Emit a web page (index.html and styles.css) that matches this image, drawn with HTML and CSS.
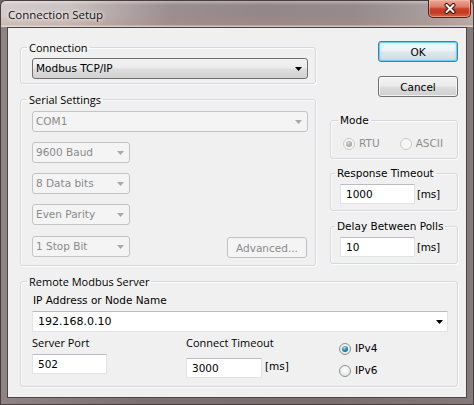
FILE: index.html
```html
<!DOCTYPE html>
<html>
<head>
<meta charset="utf-8">
<link rel="stylesheet" href="styles.css">
</head>
<body>
<div class="window">
  <div class="titlebar">
    <span class="title">Connection Setup</span>
    <button class="close" aria-label="Close">
      <svg width="14" height="11" viewBox="0 0 14 11"><path d="M3.5 2 L10.5 9 M10.5 2 L3.5 9" stroke="#4a1208" stroke-width="4" stroke-linecap="round"/><path d="M3.5 2 L10.5 9 M10.5 2 L3.5 9" stroke="#fff" stroke-width="2" stroke-linecap="round"/></svg>
    </button>
  </div>
  <div class="client">
    <div class="top">
      <div class="left">
        <fieldset class="group g-conn">
          <legend>Connection</legend>
          <div class="combo">
            <span>Modbus TCP/IP</span>
            <svg class="arrow" width="7" height="4" viewBox="0 0 7 4"><path d="M0 0 H7 L3.5 4 Z" fill="#000"/></svg>
          </div>
        </fieldset>
        <fieldset class="group g-serial">
          <legend>Serial Settings</legend>
          <div class="combo disabled">
            <span>COM1</span>
            <svg class="arrow" width="7" height="4" viewBox="0 0 7 4"><path d="M0 0 H7 L3.5 4 Z" fill="#a8a8a8"/></svg>
          </div>
          <div class="combo disabled small">
            <span>9600 Baud</span>
            <svg class="arrow" width="7" height="4" viewBox="0 0 7 4"><path d="M0 0 H7 L3.5 4 Z" fill="#a8a8a8"/></svg>
          </div>
          <div class="combo disabled small">
            <span>8 Data bits</span>
            <svg class="arrow" width="7" height="4" viewBox="0 0 7 4"><path d="M0 0 H7 L3.5 4 Z" fill="#a8a8a8"/></svg>
          </div>
          <div class="combo disabled small">
            <span>Even Parity</span>
            <svg class="arrow" width="7" height="4" viewBox="0 0 7 4"><path d="M0 0 H7 L3.5 4 Z" fill="#a8a8a8"/></svg>
          </div>
          <div class="serial-last">
            <div class="combo disabled small">
              <span>1 Stop Bit</span>
              <svg class="arrow" width="7" height="4" viewBox="0 0 7 4"><path d="M0 0 H7 L3.5 4 Z" fill="#a8a8a8"/></svg>
            </div>
            <button class="btn disabled adv">Advanced...</button>
          </div>
        </fieldset>
      </div>
      <div class="right">
        <button class="btn default">OK</button>
        <button class="btn cancel">Cancel</button>
        <fieldset class="group g-mode">
          <legend class="tah">Mode</legend>
          <div class="radios">
            <label class="opt disabled"><span class="radio checked"></span>RTU</label>
            <label class="opt disabled"><span class="radio"></span>ASCII</label>
          </div>
        </fieldset>
        <fieldset class="group g-side">
          <legend class="tah">Response Timeout</legend>
          <div class="unit-row"><div class="textbox w75">1000</div><span class="unit tight">[ms]</span></div>
        </fieldset>
        <fieldset class="group g-side g-delay">
          <legend class="tah">Delay Between Polls</legend>
          <div class="unit-row"><div class="textbox w75">10</div><span class="unit tight">[ms]</span></div>
        </fieldset>
      </div>
    </div>
    <fieldset class="group g-remote">
      <legend>Remote Modbus Server</legend>
      <div class="lbl tah">IP Address or Node Name</div>
      <div class="combo edit">
        <span>192.168.0.10</span>
        <svg class="arrow" width="7" height="4" viewBox="0 0 7 4"><path d="M0 0 H7 L3.5 4 Z" fill="#000"/></svg>
      </div>
      <div class="remote-row">
        <div class="col c1">
          <div class="lbl">Server Port</div>
          <div class="textbox w75">502</div>
        </div>
        <div class="col c2">
          <div class="lbl">Connect Timeout</div>
          <div class="unit-row"><div class="textbox w76">3000</div><span class="unit">[ms]</span></div>
        </div>
        <div class="col c3">
          <label class="opt"><span class="radio checked live"></span>IPv4</label>
          <label class="opt"><span class="radio"></span>IPv6</label>
        </div>
      </div>
    </fieldset>
  </div>
</div>
</body>
</html>
```
FILE: styles.css
```css
html, body {
  margin: 0;
  padding: 0;
}
body {
  width: 474px;
  height: 405px;
  overflow: hidden;
  background: #6f6464;
}
.window {
  width: 474px;
  height: 405px;
  box-sizing: border-box;
  border: 1px solid #4a3e3c;
  border-radius: 6px 6px 0 0;
  background: linear-gradient(90deg, #8f8484 0%, #7c7171 30%, #7a6f70 70%, #857a7b 100%);
  display: flex;
  flex-direction: column;
  font-family: "Open Sans", "Liberation Sans", sans-serif;
  font-size: 11px;
  color: #000;
}
.titlebar {
  height: 26px;
  flex: none;
  display: flex;
  align-items: flex-start;
  border-radius: 5px 5px 0 0;
  background:
    linear-gradient(180deg, rgba(255,255,255,0.35) 0px, rgba(255,255,255,0) 4px, rgba(0,0,0,0) 14px, rgba(190,140,120,0.28) 24px, rgba(230,220,215,0.7) 25px, rgba(230,220,215,0.7) 26px),
    linear-gradient(90deg, #d3cccc 0%, #cbc2c2 14%, #b5a9aa 24%, #9b8d90 36%, #94878a 55%, #968a8c 75%, #a79d9d 90%, #b9b1b1 100%);
}
.title {
  margin: 6px 0 0 7px;
  font-family: "Open Sans", sans-serif;
  font-size: 11.5px;
  line-height: 16px;
  color: #111;
  text-shadow: 0 0 6px rgba(255,255,255,0.9), 0 0 3px rgba(255,255,255,0.8);
}
.close {
  margin: -1px 2px 0 auto;
  width: 43px;
  height: 18px;
  padding: 0;
  border: 1px solid #5b1f14;
  border-top: none;
  border-radius: 0 0 5px 5px;
  background: linear-gradient(180deg, #e9a898 0%, #dd7d68 40%, #c8402a 52%, #c33a22 75%, #d8674b 100%);
  box-shadow: inset 0 0 0 1px rgba(255,200,180,0.5);
  display: flex;
  align-items: center;
  justify-content: center;
}
.client {
  flex: 1;
  margin: 0 6px 6px 6px;
  border: 1px solid #4e4443;
  background: #f0f0f0;
  padding: 12px 8px 0 12px;
  display: flex;
  flex-direction: column;
}
.top {
  display: flex;
  gap: 14px;
}
.left {
  width: 296px;
  display: flex;
  flex-direction: column;
}
.right {
  width: 128px;
  display: flex;
  flex-direction: column;
  align-items: stretch;
}
.group {
  margin: 0;
  padding: 3px 7px 4px 11px;
  border: 1px solid #d5d9dd;
  border-radius: 3px;
  box-shadow: inset 1px 1px 0 #fbfbfb, 1px 1px 0 #fbfbfb;
  min-width: 0;
}
.group legend {
  padding: 0 2px;
  margin-left: -5px;
  font-family: "Open Sans", sans-serif;
  font-size: 11px;
  line-height: 15px;
}
.group legend.tah, .tah {
  font-family: "DejaVu Sans", sans-serif;
  font-size: 10.5px;
}
.g-serial {
  margin-top: 8px;
  padding-top: 4px;
  padding-bottom: 7px;
  display: flex;
  flex-direction: column;
  gap: 10px;
}
.combo {
  height: 21px;
  box-sizing: border-box;
  border: 1px solid #707070;
  border-radius: 3px;
  background: linear-gradient(180deg, #f3f3f3 0%, #ebebeb 48%, #dedede 52%, #d2d2d2 100%);
  display: flex;
  align-items: center;
  justify-content: space-between;
  padding: 0 5px 0 3px;
  font-family: "DejaVu Sans", sans-serif;
  font-size: 10.5px;
  line-height: 15px;
}
.combo.disabled {
  border-color: #c2c4c6;
  background: #f4f4f4;
  color: #8a8a8a;
}
.combo.small {
  width: 98px;
}
.serial-last {
  display: flex;
  justify-content: space-between;
  align-items: flex-start;
  margin-top: 1px;
}
.btn {
  height: 21px;
  box-sizing: border-box;
  padding: 0;
  border: 1px solid #707070;
  border-radius: 3px;
  background: linear-gradient(180deg, #f2f2f2 0%, #ebebeb 48%, #dddddd 52%, #cfcfcf 100%);
  font-family: "DejaVu Sans", sans-serif;
  font-size: 10.5px;
  color: #000;
  box-shadow: inset 0 0 0 1px rgba(255,255,255,0.7);
}
.btn.disabled {
  border-color: #bfc2c4;
  background: #f4f4f4;
  color: #8a8a8a;
  box-shadow: none;
}
.adv {
  width: 80px;
  margin-top: 1px;
  margin-right: 1px;
}
.btn.default {
  width: 80px;
  align-self: flex-end;
  margin-top: 1px;
  border-color: #3c7fb1;
  box-shadow: inset 0 0 0 1px #6cd0f5, inset 0 0 3px 1px rgba(120,210,245,0.6);
  background: linear-gradient(180deg, #f4f9fb 0%, #eaf2f6 48%, #dde7ec 52%, #d2dde3 100%);
}
.btn.cancel {
  width: 80px;
  align-self: flex-end;
  margin-top: 14px;
}
.g-mode {
  margin-top: 16px;
  padding: 8px 7px 7px 12px;
}
.radios {
  display: flex;
  gap: 20px;
}
.opt {
  display: flex;
  align-items: center;
  font-family: "DejaVu Sans", sans-serif;
  font-size: 10.5px;
  line-height: 15px;
  white-space: nowrap;
}
.opt.disabled {
  color: #8d8d8d;
}
.radio {
  width: 12px;
  height: 12px;
  box-sizing: border-box;
  border-radius: 50%;
  border: 1px solid #8e9294;
  background: radial-gradient(circle at 50% 40%, #ffffff 0%, #eeeeee 50%, #d4d4d4 100%);
  display: inline-flex;
  align-items: center;
  justify-content: center;
  margin-right: 4px;
  flex: none;
}
.opt.disabled .radio {
  border-color: #c6c8ca;
  background: #f6f6f6;
}
.radio.checked::after {
  content: "";
  width: 6px;
  height: 6px;
  border-radius: 50%;
  background: radial-gradient(circle at 40% 35%, #d8d8d8 0%, #a8a8a8 60%, #909090 100%);
}
.radio.live::after {
  background: radial-gradient(circle at 40% 30%, #9fe6f6 0%, #2b8fae 45%, #0c4f6a 100%);
}
.g-side {
  margin-top: 7px;
  padding: 3px 2px 6px 9px;
}
.g-delay {
  margin-top: 8px;
}
.unit-row {
  display: flex;
  align-items: center;
}
.textbox {
  height: 20px;
  box-sizing: border-box;
  background: #fff;
  border: 1px solid #e2e3ea;
  border-top-color: #b9bcc2;
  padding: 0 5px;
  font-family: "DejaVu Sans", sans-serif;
  font-size: 10.5px;
  line-height: 18px;
}
.w75 { width: 75px; }
.w76 { width: 76px; }
.unit {
  margin-left: 3px;
  font-family: "DejaVu Sans", sans-serif;
  font-size: 10.5px;
  line-height: 15px;
  white-space: nowrap;
}
.unit.tight {
  margin-left: 2px;
  letter-spacing: -0.3px;
}
.g-remote {
  margin-top: 8px;
  padding: 4px 9px 8px 11px;
}
.lbl {
  font-family: "Open Sans", sans-serif;
  font-size: 11px;
  line-height: 15px;
}
.lbl.tah {
  font-family: "DejaVu Sans", sans-serif;
  font-size: 10.5px;
  padding-left: 1px;
}
.combo.edit {
  margin-top: 3px;
  background: #fff;
  border: 1px solid #e2e3ea;
  border-top-color: #b9bcc2;
  border-radius: 0;
  padding: 0 4px 0 5px;
  font-size: 11px;
}
.remote-row {
  display: flex;
  margin-top: 3px;
}
.col {
  display: flex;
  flex-direction: column;
}
.col .textbox, .col .unit-row {
  margin-top: 4px;
}
.c1 { width: 154px; }
.c2 { width: 153px; }
.c3 {
  padding-top: 6px;
  gap: 7px;
}
```
